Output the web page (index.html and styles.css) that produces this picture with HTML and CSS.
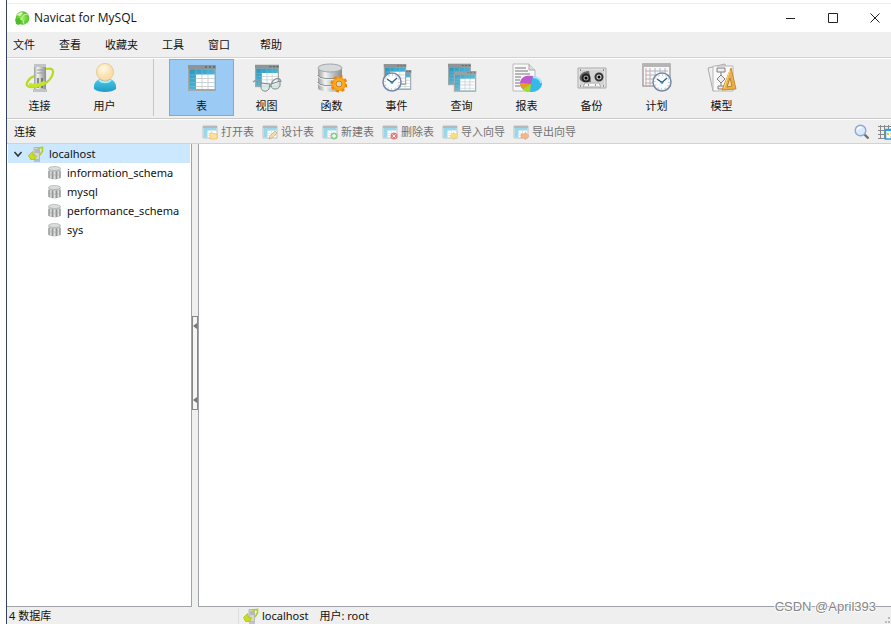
FILE: index.html
```html
<!DOCTYPE html>
<html lang="zh-CN">
<head>
<meta charset="utf-8">
<title>Navicat for MySQL</title>
<link rel="stylesheet" href="styles.css">
</head>
<body>
<svg class="defs" aria-hidden="true">
  <defs>
    <linearGradient id="metal"><stop offset="0" stop-color="#9a9e9e"/><stop offset=".3" stop-color="#f4f5f5"/><stop offset=".6" stop-color="#c0c4c4"/><stop offset="1" stop-color="#8a8e8e"/></linearGradient>
    <linearGradient id="blue" x2="1" y2="1"><stop offset="0" stop-color="#2f95ba"/><stop offset="1" stop-color="#5ccbec"/></linearGradient>
    <linearGradient id="body" x2="0" y2="1"><stop offset="0" stop-color="#57c9e8"/><stop offset="1" stop-color="#1b9cc8"/></linearGradient>
    <radialGradient id="head" cx=".4" cy=".3"><stop offset="0" stop-color="#fffbe8"/><stop offset="1" stop-color="#f9dfae"/></radialGradient>
    <radialGradient id="gold"><stop offset="0" stop-color="#ffd83b"/><stop offset="1" stop-color="#f9980f"/></radialGradient>
    <radialGradient id="lime"><stop offset="0" stop-color="#a8ee5c"/><stop offset="1" stop-color="#4fc22e"/></radialGradient>
    <symbol id="window" viewBox="0 0 30 28">
      <path d="M1 1h28v26H1z" fill="#a3a7a8"/><path d="M1 1h28v4H1z" fill="#909495"/>
      <path d="M2.500 5.500h25v19.500h-25z" fill="url(#blue)"/><path d="M9 10.500h18.500V25H9z" fill="#fff"/>
      <path d="M9 14.500h18M9 18.500h18M9 22.500h18M15 11v14M21 11v14" stroke="#ccd2d5"/>
      <path d="M3 11h6M3 14.500h6M3 18.500h6M3 22.500h6M9 6v5M15 6v5M21 6v5" stroke="#65bfdc" stroke-width=".7"/>
      <path d="M18 3h2M22 3h2M26 3h2" stroke="#5f6465" stroke-width="1.4"/>
    </symbol>
    <symbol id="clock" viewBox="0 0 20 20">
      <circle cx="10" cy="10" r="9" fill="#fafdff" stroke="#7787a8" stroke-width="1.5"/>
      <circle cx="10" cy="10" r="7" fill="none" stroke="#5e7187" stroke-dasharray=".7 2.96"/>
      <path d="M5 7l5 3.5L15 6" fill="none" stroke="#3c5974" stroke-width="1.3"/><circle cx="10" cy="10.4" r="1.4" fill="#268bb9"/>
    </symbol>
    <symbol id="database" viewBox="0 0 26 30">
      <path d="M1 5v20c0 5 24 5 24 0V5z" fill="url(#metal)"/><ellipse cx="13" cy="5" rx="12" ry="4" fill="#d6dada" stroke="#a0a5a5"/>
      <path d="M1 12c0 5 24 5 24 0M1 19c0 5 24 5 24 0" fill="none" stroke="#7d8585"/><path d="M1 13c0 5 24 5 24 0M1 20c0 5 24 5 24 0" fill="none" stroke="#f3f5f5"/>
    </symbol>
    <symbol id="host" viewBox="0 0 16 16">
      <path d="M6 1.500h5.500v12H6z" fill="#d5d7d7" stroke="#a3a7a7" stroke-width=".7"/><path d="M8 3v4M10 3v4M6 15h6" stroke="#999"/>
      <path d="M9 2l5.500-.5V5L12 9" fill="none" stroke="#b3cf17" stroke-width="1.6"/>
      <path d="M4.500 5.500L.5 9.500 2.500 13.500h4l2-3.500-3-1z" fill="#c9de18" stroke="#a2bf1c" stroke-width=".7"/>
    </symbol>
    <symbol id="smalldb" viewBox="0 0 13 14">
      <path d="M.5 2.500v9c0 2.500 12 2.500 12 0v-9z" fill="#c2c4c4"/><ellipse cx="6.500" cy="2.500" rx="6" ry="2" fill="#dadddd" stroke="#aaadad" stroke-width=".7"/>
      <path d="M1 5v7M4.500 5.500v7.500M8.500 5.500v7.500M12 5v7" stroke="#929595" stroke-width="1.200"/><path d="M2.800 5.500v7M6.500 6v7M10.500 5.500v7" stroke="#dfe1e1"/><path d="M.5 8c1 1.500 11 1.500 12 0" fill="none" stroke="#aaa" stroke-width=".6"/>
    </symbol>
    <symbol id="smallwin" viewBox="0 0 16 16">
      <path d="M1 2h14v12H1z" fill="#fff" stroke="#bdc1c3"/><path d="M1 2h14v2H1z" fill="#b5b9bb"/><path d="M1.500 4h13v2.500h-9V13.500h-4z" fill="#9bd7eb"/>
      <path d="M6 9.500h8M6 11.500h8M9.500 7v6" stroke="#ddd" stroke-width=".7"/>
    </symbol>
  </defs>
</svg>

<div class="window">
  <header class="titlebar">
    <svg class="logo" viewBox="0 0 16 16"><circle cx="8.500" cy="8" r="6.800" fill="url(#lime)"/><path d="M1 9l5-1 2 3-3 4-3-1z" fill="#50bb2e"/><path d="M2 5l5-3 2 1-3 3z" fill="#d9f9b6"/><path d="M7 9l3-4 4-1M6 9l3 1 1 4" fill="none" stroke="#c5f3a0" stroke-width="1"/></svg>
    <h1>Navicat for MySQL</h1>
    <div class="controls">
      <button aria-label="最小化"><svg viewBox="0 0 12 12"><path d="M1 6.500h9"/></svg></button>
      <button aria-label="最大化"><svg viewBox="0 0 12 12"><path d="M1.500 1.500h9v9h-9z"/></svg></button>
      <button aria-label="关闭"><svg viewBox="0 0 12 12"><path d="M1.500 1.500l9 9M10.500 1.500l-9 9"/></svg></button>
    </div>
  </header>

  <nav class="menubar" aria-label="菜单">
    <button>文件</button><button>查看</button><button>收藏夹</button><button>工具</button><button>窗口</button><button class="help">帮助</button>
  </nav>

  <div class="toolbar" role="toolbar" aria-label="对象">
    <button class="tool"><svg viewBox="0 0 30 30"><path d="M9 1h12v28H9z" fill="url(#metal)"/><path d="M9 1h12v3H9zM8 26h14v3H8z" fill="#c1c5c5"/><path d="M12 7h6M12 10h6" stroke="#999"/><path d="M13 15v10M17 15v10" stroke="#555" stroke-width="1.300"/><path d="M21 6c12-3 7 10-2 15C8 26-2 25 3 18c1-2 4-4 6-5" fill="none" stroke="#b5dc19" stroke-width="2.200"/><path d="M4 21c5 3 11 1 16-2" fill="none" stroke="#c5e52c" stroke-width="3.500"/></svg><span>连接</span></button>
    <button class="tool"><svg viewBox="0 0 30 30"><path d="M4 26c-1-7 4-11 11-11s12 4 11 11c-4 4-18 4-22 0z" fill="url(#body)"/><path d="M9 17c3 3 9 3 12 0" fill="none" stroke="#acebf7" stroke-width="2"/><circle cx="15" cy="9" r="8.500" fill="url(#head)" stroke="#ecca8f"/></svg><span>用户</span></button>
    <span class="divider"></span>
    <button class="tool active" aria-pressed="true"><svg viewBox="0 0 30 30"><use href="#window" y="1" width="30" height="28"/></svg><span>表</span></button>
    <button class="tool"><svg viewBox="0 0 30 30"><use href="#window" x="2" y="1" width="26" height="24"/><path d="M1 19l3-2 6 3M19 22c2-7 9-9 10-3" fill="none" stroke="#929a9b" stroke-width="1.500"/><path d="M9 20l9 1-1 5c-3 4-8 2-8-2zM19 21l9-3v5c-2 4-8 4-9 0z" fill="#d7ebe8" fill-opacity=".85" stroke="#7c8989"/></svg><span>视图</span></button>
    <button class="tool"><svg viewBox="0 0 30 30"><use href="#database" x="0" y="0" width="26" height="30"/><circle cx="22" cy="21" r="7" fill="url(#gold)" stroke="#ee840c" stroke-width="3" stroke-dasharray="3 2.500"/><circle cx="22" cy="21" r="6.500" fill="url(#gold)"/><circle cx="22" cy="21" r="3" fill="#d8d5c8" stroke="#cf7a0a"/></svg><span>函数</span></button>
    <button class="tool"><svg viewBox="0 0 30 30"><use href="#window" x="7" y="5" width="23" height="24"/><use href="#window" x="1" y="0" width="24" height="23"/><use href="#clock" x="0" y="9" width="20" height="20"/></svg><span>事件</span></button>
    <button class="tool"><svg viewBox="0 0 30 30"><use href="#window" x="0" y="0" width="25" height="23"/><use href="#window" x="6" y="7" width="24" height="23" opacity=".88"/></svg><span>查询</span></button>
    <button class="tool"><svg viewBox="0 0 30 30"><path d="M1 1h16l6 6v21H1z" fill="#f8f8f8" stroke="#bbb"/><path d="M17 1v6h6" fill="#ddd" stroke="#aaa"/><path d="M3 5h11M3 8h13M3 11h15M3 14h6M3 17h5M3 20h5M3 23h5" stroke="#777" stroke-width="1.200"/><ellipse cx="19" cy="21" rx="11" ry="8" fill="#35b9e9"/><path d="M19 21L8 20c1-7 7-8 13-7z" fill="#be5ac9"/><path d="M19 21L8 20c0 3 1 5 3 6z" fill="#f09b20"/><path d="M19 21l-8 5c2 3 5 3 7 3z" fill="#a7dc24"/><path d="M21 14c5 0 8 3 8 6" fill="none" stroke="#a8e6f7" stroke-width="2"/></svg><span>报表</span></button>
    <button class="tool"><svg viewBox="0 0 30 30"><path d="M1 5h28v20H1z" fill="#e2e3e2" stroke="#aaa"/><path d="M3 7h24v15H3z" fill="#d2d4d2"/><path d="M3 17c-2-5 3-9 9-9l2 11H6z" fill="#666"/><circle cx="9" cy="15" r="3.500" fill="#aaa" stroke="#222" stroke-width="2"/><circle cx="22" cy="14" r="3.500" fill="#ddd" stroke="#333" stroke-width="2"/><circle cx="9" cy="15" r="1.500"/><circle cx="22" cy="14" r="1.500"/><path d="M6 24l2-4h14l2 4z" fill="#f7f7f7" stroke="#aaa"/><path d="M3 7h1M26 7h1M3 23h1M26 23h1M11 22h1M18 22h1" stroke="#777" stroke-width="1.500"/></svg><span>备份</span></button>
    <button class="tool"><svg viewBox="0 0 30 30"><path d="M1 1h27v22H1z" fill="#f8f8f8" stroke="#a4a4a4" stroke-width="1.500"/><path d="M1 1h27v3H1z" fill="#b5b5b5"/><path d="M3 8h23M3 12h23M3 16h23M3 20h23M8 5v17M13 5v17M18 5v17M23 5v17" stroke="#b4b4ba"/><path d="M4 5v17" stroke="#e4a3a3"/><use href="#clock" x="10" y="9" width="20" height="20"/></svg><span>计划</span></button>
    <button class="tool"><svg viewBox="0 0 30 30"><path d="M1 5l17-4 4 23-16 4z" fill="#f0f0f0" stroke="#aaa"/><path d="M6 3h20v25H6z" fill="#f9f9f9" stroke="#b6b6b6"/><path d="M10 5h8v4h-8zM14 9v4M14 12l4 4-4 4-4-4zM14 20v3M11 23h6v3h-6z" fill="#eee" stroke="#808080"/><path d="M24 5l5 21-14 1z" fill="#ecb04a" stroke="#c98a2d"/><path d="M23 15l2 8-5 1z" fill="#f4e3bb" stroke="#bb7f28"/><path d="M23 7L17 25" stroke="#ffda7d"/></svg><span>模型</span></button>
  </div>

  <div class="subbar">
    <h2>连接</h2>
    <div class="actions" role="toolbar" aria-label="表操作">
      <button disabled><svg viewBox="0 0 16 16"><use href="#smallwin"/><path d="M8 9h3l1 1h3v5H8z" fill="#ffe2a0" stroke="#e8bd6c" stroke-width=".7"/></svg>打开表</button>
      <button disabled><svg viewBox="0 0 16 16"><use href="#smallwin"/><path d="M7 15l1-3 5-5 2 2-5 5z" fill="#f6dda0" stroke="#b5aa8c" stroke-width=".7"/></svg>设计表</button>
      <button disabled><svg viewBox="0 0 16 16"><use href="#smallwin"/><circle cx="12" cy="12" r="3.500" fill="#8bcb92"/><path d="M10 12h4M12 10v4" stroke="#fff" stroke-width="1.300"/></svg>新建表</button>
      <button disabled><svg viewBox="0 0 16 16"><use href="#smallwin"/><circle cx="12" cy="12" r="3.500" fill="#de7e81"/><path d="M10.500 10.500l3 3M13.500 10.500l-3 3" stroke="#fff"/></svg>删除表</button>
      <button disabled><svg viewBox="0 0 16 16"><use href="#smallwin"/><path d="M8 12l4-4v2h4v4h-4v2z" fill="#f7e17b" stroke="#e4c960" stroke-width=".5"/></svg>导入向导</button>
      <button disabled><svg viewBox="0 0 16 16"><use href="#smallwin"/><path d="M16 12l-4-4v2H8v4h4v2z" fill="#f5b888" stroke="#e69f6c" stroke-width=".5"/></svg>导出向导</button>
    </div>
    <div class="view-tools">
      <button aria-label="搜索"><svg viewBox="0 0 16 16"><path d="M10.500 10.500l4 4" stroke="#776b6b" stroke-width="2.400"/><circle cx="6.500" cy="6.500" r="5.300" fill="#d8eafd" stroke="#8fa8cf" stroke-width="1.400"/><path d="M3.500 6c0-2 2-3 4-2" fill="none" stroke="#fff" stroke-width="1.500"/></svg></button>
      <button aria-label="网格视图"><svg viewBox="0 0 16 16"><path d="M0 2.500h16M0 6.500h16M0 10.500h16M0 14.500h16M2.500 1v14M6.500 1v14M10.500 1v14M14.500 1v14" stroke="#888"/><path d="M7.500 5.500H17V15H7.500z" fill="#fff" stroke="#20a7df" stroke-width="1.500"/><path d="M7 5h9v2H7z" fill="#20a7df"/><path d="M9 9h2v2H9z" fill="#f6bd35"/><path d="M12 10h4M12 13h4" stroke="#aaa"/></svg></button>
    </div>
  </div>

  <div class="workspace">
    <aside class="sidebar">
      <ul class="tree">
        <li class="row root"><svg class="chevron" viewBox="0 0 10 10"><path d="M1.500 3l3.500 4 3.500-4"/></svg><svg class="host"><use href="#host"/></svg>localhost</li>
        <li class="row"><svg class="db"><use href="#smalldb"/></svg>information_schema</li>
        <li class="row"><svg class="db"><use href="#smalldb"/></svg>mysql</li>
        <li class="row"><svg class="db"><use href="#smalldb"/></svg>performance_schema</li>
        <li class="row"><svg class="db"><use href="#smalldb"/></svg>sys</li>
      </ul>
    </aside>
    <div class="splitter"><button class="grip" aria-label="折叠侧栏"><svg viewBox="0 0 4 6"><path d="M4 0v6L0 3z"/></svg><svg viewBox="0 0 4 6"><path d="M4 0v6L0 3z"/></svg></button></div>
    <main class="content"></main>
  </div>

  <footer class="statusbar">
    <span class="count">4 数据库</span>
    <span class="session"><svg class="host"><use href="#host"/></svg>localhost</span>
    <span>用户: root</span>
    <svg class="resize" viewBox="0 0 8 8"><path d="M5 1h2v2H5zM2 5h2v2H2zM5 5h2v2H5z"/></svg>
  </footer>
  <span class="watermark">CSDN @April393</span>
</div>
</body>
</html>
```
FILE: styles.css
```css
* { box-sizing: border-box; }

body {
  margin: 0;
  background: #fff;
  color: #111;
  font: 11px/16px "Noto Sans", "Noto Sans CJK SC", sans-serif;
}

button {
  padding: 0;
  border: 0;
  background: none;
  color: inherit;
  font: inherit;
}

h1, h2, ul { margin: 0; padding: 0; font: inherit; }
svg { flex: none; }
.defs { position: absolute; width: 0; height: 0; }

.window {
  position: relative;
  display: flex;
  flex-direction: column;
  height: 100vh;
  margin-left: 6px;
  border-left: 1px solid #35435a;
  background: #efefef;
  overflow: hidden;
}

.titlebar {
  display: flex;
  align-items: center;
  gap: 4px;
  height: 32px;
  padding: 3px 0 0 7px;
  background: linear-gradient(#fff 3px, #ededed 3px, #ededed 4px, #fff 4px);
}
.titlebar h1 { font: 12px/16px "Open Sans", sans-serif; }
.logo { width: 16px; height: 16px; }
.controls { display: flex; gap: 10px; margin-left: auto; }
.controls button { display: grid; place-items: center; width: 32px; height: 28px; }
.controls svg { width: 12px; height: 12px; fill: none; stroke: #222; }

.menubar {
  display: flex;
  gap: 24px;
  height: 26px;
  padding: 0 6px;
  border-bottom: 1px solid #d2d2d2;
}
.help { margin-left: 6px; }

.toolbar {
  display: flex;
  height: 61px;
  border-top: 1px solid #fff;
  border-bottom: 1px solid #c9c9c9;
}
.tool {
  display: flex;
  flex-direction: column;
  align-items: center;
  gap: 5px;
  width: 65px;
  height: 57px;
  padding-top: 4px;
}
.tool svg { width: 30px; height: 30px; }
.tool.active { background: #9bcbf5; box-shadow: inset 0 0 0 1px #68b1ec; }
.divider { width: 1px; margin: 0 15px 2px 16px; background: #c5c5c5; }

.subbar {
  display: flex;
  align-items: center;
  height: 25px;
  border-top: 1px solid #fff;
  border-bottom: 1px solid #d2d2d2;
}
.subbar h2 { width: 195px; padding-left: 7px; }
.actions { display: flex; gap: 8px; color: #727272; }
.actions button { display: flex; align-items: center; gap: 3px; }
.actions svg { width: 16px; height: 16px; }
.view-tools { display: flex; gap: 8px; margin: 0 -3px 0 auto; }
.view-tools button { display: grid; }
.view-tools svg { width: 16px; height: 16px; }

.workspace { display: flex; flex: 1; min-height: 0; }
.sidebar {
  width: 185px;
  border-right: 1px solid #a0a4aa;
  border-bottom: 1px solid #a0a4aa;
  background: #fff;
}
.tree { padding: 0 1px; list-style: none; }
.row { display: flex; align-items: center; gap: 6px; height: 19px; padding-left: 40px; }
.root { gap: 5px; padding-left: 5px; background: #cce8ff; }
.chevron { width: 10px; height: 10px; fill: none; stroke: #333; stroke-width: 1.500; }
.host { width: 16px; height: 16px; }
.db { width: 13px; height: 14px; }

.splitter { display: grid; align-items: center; width: 6px; padding-bottom: 26px; }
.grip {
  display: flex;
  flex-direction: column;
  align-items: center;
  justify-content: space-between;
  height: 94px;
  padding: 6px 0;
  border: 1px solid #888;
  background: #f5f5f5;
}
.grip svg { width: 4px; height: 6px; fill: #777; }
.content {
  flex: 1;
  border-left: 1px solid #a0a4aa;
  border-bottom: 1px solid #a0a4aa;
  background: #fff;
}

.statusbar { display: flex; align-items: center; gap: 11px; height: 17px; padding-left: 2px; }
.count { width: 218px; }
.session { display: flex; align-items: center; gap: 3px; padding-left: 4px; border-left: 1px solid #ddd; }
.resize { align-self: end; width: 8px; height: 8px; margin-left: auto; fill: #bbb; }

.watermark {
  position: absolute;
  right: 15px;
  bottom: 9px;
  color: #858585;
  font: 13px/16px "Liberation Sans", sans-serif;
  text-shadow: 1px 0 #fff, -1px 0 #fff, 0 1px #fff;
}
```
